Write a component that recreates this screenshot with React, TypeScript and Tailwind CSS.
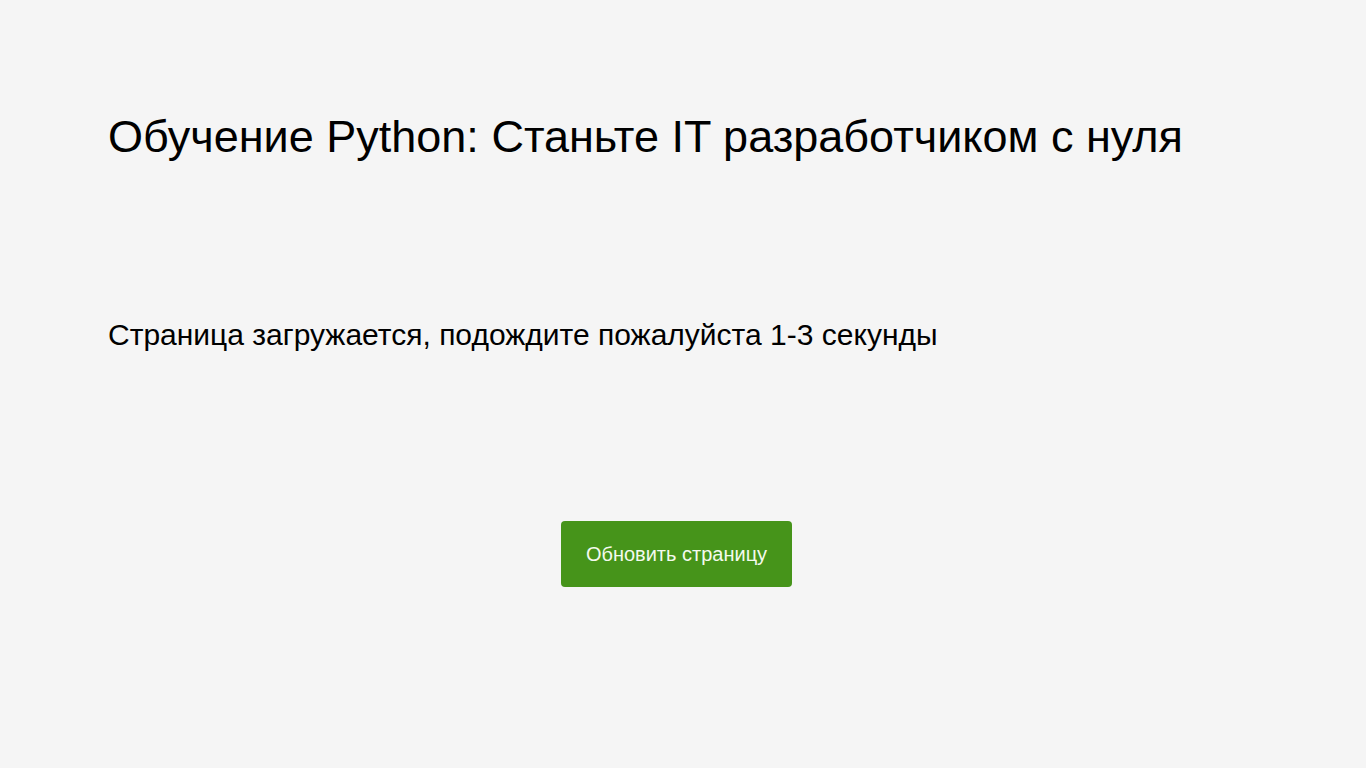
export default function App() {
  return (
    <div
      className="min-h-screen w-full bg-[#f5f5f5] text-black"
      style={{ fontFamily: '"Liberation Sans", Arial, sans-serif' }}
    >
      <div className="flex flex-col pl-[108px] pr-[121px] pt-[111px]">
        <h1 className="text-[45px] leading-[52px] font-normal m-0 whitespace-nowrap">
          Обучение Python: Станьте IT разработчиком с нуля
        </h1>
        <p className="mt-[155px] text-[30px] leading-[34px]">
          Страница загружается, подождите пожалуйста 1-3 секунды
        </p>
        <div className="mt-[169px] flex justify-center">
          <button className="h-[66px] w-[231px] rounded-[4px] bg-[#46941a] text-[20px] text-[#f4faee] flex items-center justify-center">
            Обновить страницу
          </button>
        </div>
      </div>
    </div>
  );
}
